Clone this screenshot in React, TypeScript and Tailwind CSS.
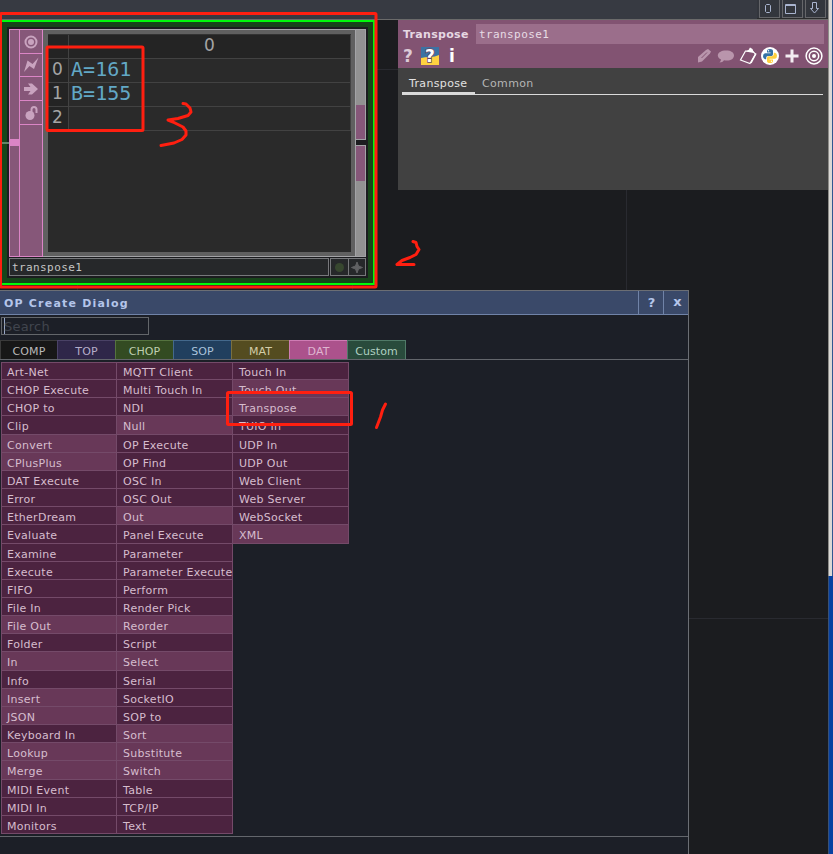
import clsx from "clsx";
import type { ReactNode } from "react";

type Op = [name: string, filter?: boolean];

const columns: Op[][] = [
  [
    ["Art-Net"], ["CHOP Execute"], ["CHOP to"], ["Clip"], ["Convert", true], ["CPlusPlus", true],
    ["DAT Execute"], ["Error"], ["EtherDream"], ["Evaluate"], ["Examine"], ["Execute"], ["FIFO"],
    ["File In"], ["File Out", true], ["Folder"], ["In", true], ["Info"], ["Insert", true],
    ["JSON", true], ["Keyboard In"], ["Lookup", true], ["Merge", true], ["MIDI Event"], ["MIDI In"],
    ["Monitors"],
  ],
  [
    ["MQTT Client"], ["Multi Touch In"], ["NDI"], ["Null", true], ["OP Execute"], ["OP Find"],
    ["OSC In"], ["OSC Out"], ["Out", true], ["Panel Execute"], ["Parameter"], ["Parameter Execute"],
    ["Perform"], ["Render Pick"], ["Reorder", true], ["Script"], ["Select", true], ["Serial"],
    ["SocketIO"], ["SOP to"], ["Sort", true], ["Substitute", true], ["Switch", true], ["Table"],
    ["TCP/IP"], ["Text"],
  ],
  [
    ["Touch In"], ["Touch Out", true], ["Transpose", true], ["TUIO In"], ["UDP In"], ["UDP Out"],
    ["Web Client"], ["Web Server"], ["WebSocket"], ["XML", true],
  ],
];

const columnWidths = ["w-[116px]", "-ml-px w-[117px]", "-ml-px w-[117px]"];

const families = [
  { name: "COMP", style: "w-[57px] bg-[#171717] border-[#3a3a3a] text-[#b9b9b9]" },
  { name: "TOP", style: "w-[58px] bg-[#2f2749] border-[#4a4266] text-[#b5aeca]" },
  { name: "CHOP", style: "w-[58px] bg-[#334b22] border-[#55733f] text-[#bfd0b0]" },
  { name: "SOP", style: "w-[58px] bg-[#213f5e] border-[#44698c] text-[#a9c3db]" },
  { name: "MAT", style: "w-[58px] bg-[#544c20] border-[#7a7040] text-[#d3cda8]" },
  { name: "DAT", style: "w-[58px] bg-[#ac528c] border-[#cf7cb4] text-[#dfb5d0]" },
  { name: "Custom", style: "w-[59px] bg-[#294b3c] border-[#507a68] border-r text-[#afd0c2]" },
];

const tallRows = [3, 9, 16, 22];

function rowHeight(i: number) {
  if (i === 0) return "h-[17px] leading-[20px]";
  return tallRows.includes(i) ? "h-[19px] leading-[22px]" : "h-[18px] leading-[22px]";
}

function TopBar() {
  return (
    <div className="flex h-5 shrink-0 justify-end border-b border-[#6a6a6a] bg-[#373a42]">
      <div className="flex h-[19px] w-[71px] gap-[2px] border-b border-[#2b2b2c] bg-[#33363d] pl-[2px] text-[#a9b4cf]">
        {[
          <path key="count" d="M6.500 4.500h3l1 1v6l-1 1h-3l-1-1v-6z" />,
          <path key="window" d="M2.500 4.500h10v9h-10zM2.500 5.500h10" />,
          <path key="down" d="M6.500 2.500h4v6h2l-4 4.500-4-4.500h2z" />,
        ].map((icon, i) => (
          <div key={i} className="h-[18px] w-[21px] border border-t-0 border-[#65666a]">
            <svg width="19" height="17" fill="none" stroke="currentColor">{icon}</svg>
          </div>
        ))}
      </div>
    </div>
  );
}

function FlagButton({ children, h }: { children: ReactNode; h: string }) {
  return (
    <div className={clsx("flex items-center justify-center border-b border-[#db85c6] text-[#c9a3bf]", h)}>
      <svg width="16" height="16" viewBox="0 0 16 16">{children}</svg>
    </div>
  );
}

function NodeTable() {
  const rows = ["A=161", "B=155", ""];
  return (
    <div className="flex-1 border-x-[5px] border-b-4 border-t-4 border-r-4 border-[#606060] bg-[#2a2a2a]">
      <div className="flex h-[25px] border-b border-t border-[#424242] border-t-[#333] bg-[#242424]">
        <div className="w-[21px] border-r border-[#424242]" />
        <div className="flex-1 border-r border-[#424242] text-center text-[17px] leading-[21px] text-[#a5a5a5]">0</div>
      </div>
      {rows.map((value, i) => (
        <div key={i} className="flex h-6 border-b border-[#424242]">
          <div className="w-[21px] border-r border-[#424242] bg-[#242424] pl-[4px] text-[17px] leading-[21px] text-[#a5a5a5]">{i}</div>
          <div className="flex-1 border-r border-[#424242] pl-[2px] font-['DejaVu_Sans_Mono',monospace] text-[20px] leading-[20px] tracking-[0.05px] text-[#62a8c6]">
            {value}
          </div>
        </div>
      ))}
    </div>
  );
}

function OpNode() {
  return (
    <div className="h-[265px] w-[375px] border-2 border-[#00fb0a] bg-[#17451a] p-[5px]">
      <div className="relative h-[251px] w-[361px] bg-[#1b1c1f] p-[2px]">
        <div className="flex h-[228px] w-[357px]">
          <div className="w-[11px] border border-[#db85c6] bg-[#865779]" />
          <div className="flex w-[23px] flex-col border-y border-r border-[#db85c6] bg-[#865779]">
            <FlagButton h="h-6">
              <circle cx="8" cy="8" r="5.500" fill="none" stroke="currentColor" strokeWidth="2" />
              <circle cx="8" cy="8" r="3" fill="currentColor" />
            </FlagButton>
            <FlagButton h="h-[23px]">
              <path d="M1 15 4.500 3.500 9.500 7 15.500.500 11 12 6.500 9z" fill="currentColor" />
            </FlagButton>
            <FlagButton h="h-6">
              <path d="M1 6h6.500L5 2.500h4L15 8l-6 5.500H5L7.500 10H1z" fill="currentColor" />
            </FlagButton>
            <FlagButton h="h-6">
              <circle cx="7" cy="10.500" r="4.500" fill="currentColor" />
              <path d="M8.500 7V4.500q0-2.500 2.500-2.500t2.500 2.500V8" fill="none" stroke="currentColor" strokeWidth="2" />
            </FlagButton>
          </div>
          <div className="flex flex-1 border-y border-[#a3a3a6]">
            <NodeTable />
          </div>
          <div className="flex w-[11px] flex-col bg-[#1b1c1f]">
            <div className="flex h-[111px] flex-col justify-end border border-[#a3a3a6] bg-[#929292]">
              <div className="h-[34px] bg-[#865779]" />
            </div>
            <div className="h-[5px] border-l border-[#a3a3a6]" />
            <div className="h-[112px] border border-[#a3a3a6] bg-[#929292]">
              <div className="h-[35px] bg-[#865779]" />
            </div>
          </div>
        </div>
        <div className="mt-px flex h-[18px] w-[357px] gap-[1px]">
          <div className="w-[320px] border border-[#77787b] bg-[#26282a] pl-[2px] font-['DejaVu_Sans_Mono',monospace] text-[11px] leading-[18px] tracking-[0.4px] text-[#c5c5c5]">
            transpose1
          </div>
          <div className="flex w-9 border border-[#77787b] bg-[#26282a]">
            <svg width="17" height="16"><circle cx="8.500" cy="8.500" r="4.500" fill="#37472f" /></svg>
            <svg className="border-l border-[#77787b]" width="17" height="16">
              <path d="m8 3 1.500 4 4 1.500-4 1.500L8 14l-1.500-4-4-1.500 4-1.500z" fill="#606163" stroke="#606163" />
            </svg>
          </div>
        </div>
        {/* input connector */}
        <div className="absolute left-[2px] top-[112px] h-[7px] w-[11px] bg-[#db85c6]" />
        <div className="absolute -left-[5px] top-[115px] h-[2px] w-[7px] bg-[#64856a]" />
      </div>
    </div>
  );
}

function ParameterPanel() {
  return (
    <div className="h-[170px] w-[430px] bg-[#414141]">
      <div className="h-12 bg-[#825372] pt-1">
        <div className="flex h-5 items-center pr-1">
          <span className="w-[78px] pl-[5px] pt-[2px] text-[11px] font-bold leading-[22px] tracking-[0.3px] text-[#e6d8e2]">Transpose</span>
          <span className="h-5 flex-1 bg-[#9b6e8b] pl-[3px] font-['DejaVu_Sans_Mono',monospace] text-[11px] leading-[21px] tracking-[0.4px] text-[#e8dce5]">
            transpose1
          </span>
        </div>
        <div className="flex h-6 items-center pl-[5px]">
          <span className="w-[18px] text-[17px] font-bold leading-6 text-[#dccad6]">?</span>
          <svg className="-mt-px" width="18" height="18">
            <path d="M0 0h18v18H0z" fill="#3b72a3" />
            <path d="M0 11q4-1 9-1t9-2v10H0z" fill="#ffd140" />
            <text x="9" y="15" textAnchor="middle" fontSize="17" fontWeight="bold" fill="#fff" stroke="#634463" strokeWidth="1.500" paintOrder="stroke">?</text>
          </svg>
          <span className="ml-[10px] text-[17px] font-bold leading-6 text-white">i</span>
          <div className="ml-auto flex items-center gap-1 pr-[5px]">
            <svg width="18" height="18" viewBox="0 0 18 18">
              <path d="m3 10 8-7 2-1 3 2.500-1 2-8 8L3 15.500z" fill="#b995ac" />
              <path d="m6.500 11 5.500-5.500" stroke="#825372" />
            </svg>
            <svg width="18" height="18" viewBox="0 0 18 18">
              <path d="M9 3.500c5 0 8 2 8 5s-3 5-7 5c-1 0-2 0-3-.300C6 14.500 4.500 15.500 2.500 15.500 3.500 14.500 4 13.500 4 12.500 2 11.500.800 10 .800 8.500c0-3 3.500-5 8.200-5z" fill="#b995ac" />
            </svg>
            <svg width="18" height="18" viewBox="0 0 18 18">
              <path d="M6.500 4 1.500 13l9.500 3.500L16.500 7 13.500 4z" fill="none" stroke="#fff" strokeWidth="1.200" />
              <path d="m6.500 4.500 3-1.500 1.500-2.500L13.500 2l1.500 4z" fill="#fff" />
              <path d="m17 6.500-5 9.500" stroke="#fff" strokeWidth="1.500" />
            </svg>
            <svg width="18" height="18" viewBox="0 0 18 18">
              <circle cx="9" cy="9" r="9" fill="#fff" />
              <path d="M9 2Q6 2 6 4v1.500h3.500v.7H4Q2 6.500 2 9.200t2 3h1.200v-1.500Q5.200 9 7 9h3.500Q12 9 12 7.300V4Q12 2 9 2" fill="#3572a5" />
              <path d="M9 16q3 0 3-2v-1.500H8.500v-.7H14q2-.300 2-3t-2-3h-1.200v1.500Q12.800 9 11 9.300H7.500Q6 9.300 6 11v3q0 2 3 2" fill="#ffcf3d" />
              <circle cx="7.500" cy="3.700" r=".7" fill="#fff" />
              <circle cx="10.500" cy="14.200" r=".7" fill="#fff" />
            </svg>
            <svg width="18" height="18"><path d="M9 2.500v13M2.500 9h13" stroke="#f3edf1" strokeWidth="3" /></svg>
            <svg width="18" height="18" fill="none" stroke="#fff">
              <circle cx="9" cy="9" r="7.900" strokeWidth="1.500" />
              <circle cx="9" cy="9" r="4.700" strokeWidth="1.500" />
              <circle cx="9" cy="9" r="2" fill="#fff" stroke="none" />
            </svg>
          </div>
        </div>
      </div>
      <div className="mx-1 mr-[5px] flex h-[27px] border-b border-[#dadada] pt-[3px] text-[11px] leading-[25px] tracking-[0.35px]">
        <div className="h-6 w-[73px] border-b-[3px] border-[#dadada] pl-[7px] text-[#e2e2e2]">Transpose</div>
        <div className="pl-[7px] text-[#b5b5b5]">Common</div>
      </div>
    </div>
  );
}

function CreateDialog() {
  return (
    <div className="flex h-[564px] w-[689px] flex-col border-r border-t border-[#6b6e74] bg-[#1c1f27]">
      <div className="flex h-6 border-b border-[#7083a8] bg-[#3a4969] text-[11px] font-bold leading-[25px] text-[#b4c5ea]">
        <div className="flex-1 pl-1 tracking-[1.2px]">OP Create Dialog</div>
        <div className="w-[25px] border-l border-[#7083a8] pl-px text-center text-[13px] leading-[23px]">?</div>
        <div className="w-[25px] border-l border-[#7083a8] pl-[3px] text-center text-[13px] leading-[22px]">x</div>
      </div>
      <div className="h-[25px] pl-px pt-[2px]">
        <div className="flex h-[18px] w-[148px] border border-[#63666a] pl-[2px] text-[13px] leading-[18px] tracking-[0.2px] text-[#41454e]">
          <span className="-mr-px w-px bg-[#98a7c8]" />
          Search
        </div>
      </div>
      <div className="flex h-5 border-b border-[#63666c] text-center text-[11px] leading-[22px] tracking-[0.1px]">
        {families.map((family) => (
          <div key={family.name} className={clsx("border-l border-t", family.style)}>{family.name}</div>
        ))}
      </div>
      <div className="flex items-start pb-[2px] pl-px pt-[2px] text-[11px] tracking-[0.28px] text-[#d6bdce]">
        {columns.map((ops, c) => (
          <div key={c} className={clsx("border-x border-b border-[#744a69]", columnWidths[c])}>
            {ops.map(([name, filter], i) => (
              <div
                key={name}
                className={clsx(
                  "overflow-hidden whitespace-nowrap border-t border-[#744a69]",
                  c === 0 ? "pl-[5px]" : "pl-[6px]",
                  filter ? "bg-[#683858]" : "bg-[#4c2340]",
                  rowHeight(i),
                )}
              >
                {name}
              </div>
            ))}
          </div>
        ))}
      </div>
      <div className="flex-1 border-t border-[#63666c]" />
    </div>
  );
}

// freehand red marks over the whole workspace
function Annotations() {
  return (
    <svg className="pointer-events-none absolute left-0 top-0" width="833" height="854" fill="none" stroke="#ff1f10" strokeWidth="3" strokeLinecap="round" strokeLinejoin="round">
      <rect x=".500" y="13.500" width="375.500" height="273.500" rx="1" />
      <rect x="47" y="47" width="96" height="83.500" rx="1" />
      <rect x="227.500" y="392.500" width="124" height="32" rx="1" />
      <path d="M183 103.500l3 .500 4 4 1 4-3 3.500-10 3-10 1.500 5 2 10 5 3 4v4l-4 4.500-8 3.500-13 2.500" />
      <path d="M413 241.500l3 1 1 4 2 3-3 5-6 3-8 3-5 4h17" />
      <path d="M385.500 404l-3 6-2 7-4 10.500" />
    </svg>
  );
}

export default function App() {
  return (
    <div className="relative flex h-[854px] w-[833px] overflow-hidden font-['DejaVu_Sans',Verdana,sans-serif]">
      <div className="flex w-[828px] flex-col bg-[#1b1c1f]">
        <TopBar />
        <div className="relative flex-1">
          <svg className="absolute left-0 top-0" width="828" height="834" stroke="#292a30">
            <path d="M77.500 0v834M352.500 0v834M626.500 0v834M0 49.500h828M0 598.500h828" />
          </svg>
          <div className="relative">
            <div className="flex h-[270px] gap-[23px]">
              <OpNode />
              <ParameterPanel />
            </div>
            <CreateDialog />
          </div>
        </div>
      </div>
      <div className="flex w-[5px] flex-col">
        <div className="h-[576px] border-l border-r border-l-[#8e8d89] border-r-[#2f5791] bg-[#dad8d5]" />
        <div className="flex-1 border-l border-[#385177] bg-[#0842a1]" />
      </div>
      <Annotations />
    </div>
  );
}
